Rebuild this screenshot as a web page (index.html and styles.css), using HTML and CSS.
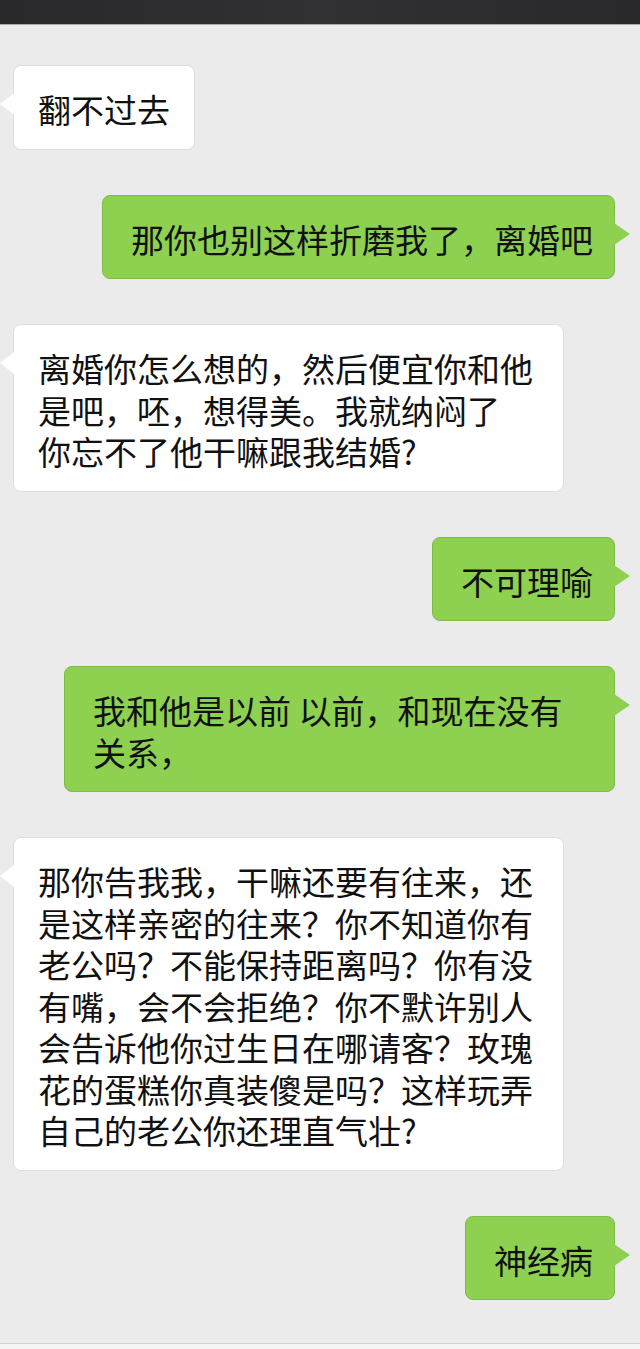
FILE: index.html
```html
<!DOCTYPE html>
<html lang="zh-CN">
<head>
    <meta charset="UTF-8">
    <meta name="viewport" content="width=device-width, initial-scale=1.0">
    <title>聊天</title>
    <link rel="stylesheet" href="styles.css">
</head>
<body>
    <div class="status-bar"></div>
    <div class="chat">
        <div class="row left">
            <div class="bubble">翻不过去</div>
        </div>
        <div class="row right">
            <div class="bubble">那你也别这样折磨我了，离婚吧</div>
        </div>
        <div class="row left">
            <div class="bubble">离婚你怎么想的，然后便宜你和他是吧，呸，想得美。我就纳闷了<br>你忘不了他干嘛跟我结婚?</div>
        </div>
        <div class="row right">
            <div class="bubble">不可理喻</div>
        </div>
        <div class="row right">
            <div class="bubble">我和他是以前 以前，和现在没有关系，</div>
        </div>
        <div class="row left">
            <div class="bubble">那你告我我，干嘛还要有往来，还是这样亲密的往来？你不知道你有老公吗？不能保持距离吗？你有没有嘴，会不会拒绝？你不默许别人会告诉他你过生日在哪请客？玫瑰花的蛋糕你真装傻是吗？这样玩弄自己的老公你还理直气壮?</div>
        </div>
        <div class="row right">
            <div class="bubble">神经病</div>
        </div>
    </div>
    <div class="input-bar"></div>
</body>
</html>
```

FILE: styles.css
```css
body {
    margin: 0;
    padding: 0;
    height: 1349px;
    display: flex;
    flex-direction: column;
    background: #ebebeb;
    font-family: "Noto Sans CJK SC", "Noto Sans", sans-serif;
    color: #111;
    overflow: hidden;
}
.status-bar {
    height: 24px;
    background: linear-gradient(90deg, #29292b, #313133 50%, #29292b);
    border-bottom: 1px solid #a8a8a8;
}
.chat {
    flex: 1;
    display: flex;
    flex-direction: column;
    gap: 45px;
    padding: 40px 25px 0 13px;
}
.row {
    display: flex;
}
.row.left {
    justify-content: flex-start;
}
.row.right {
    justify-content: flex-end;
}
.bubble {
    position: relative;
    max-width: 551px;
    box-sizing: border-box;
    font-size: 33px;
    line-height: 41.5px;
    padding: 23px 24px 18px 24px;
    border-radius: 8px;
}
.left .bubble {
    background: #fff;
    border: 1px solid #dedede;
}
.right .bubble {
    background: #8ed04f;
    border: 1px solid #7fbb47;
    padding: 23px 21px 18px 28px;
}
.bubble::before {
    content: "";
    position: absolute;
    top: 27px;
    border-top: 11px solid transparent;
    border-bottom: 11px solid transparent;
}
.left .bubble::before {
    left: -14px;
    border-right: 14px solid #fff;
}
.right .bubble::before {
    right: -16px;
    border-left: 16px solid #8ed04f;
}
.input-bar {
    height: 5px;
    background: #f5f5f5;
    border-top: 1px solid #cfcfcf;
}
```
